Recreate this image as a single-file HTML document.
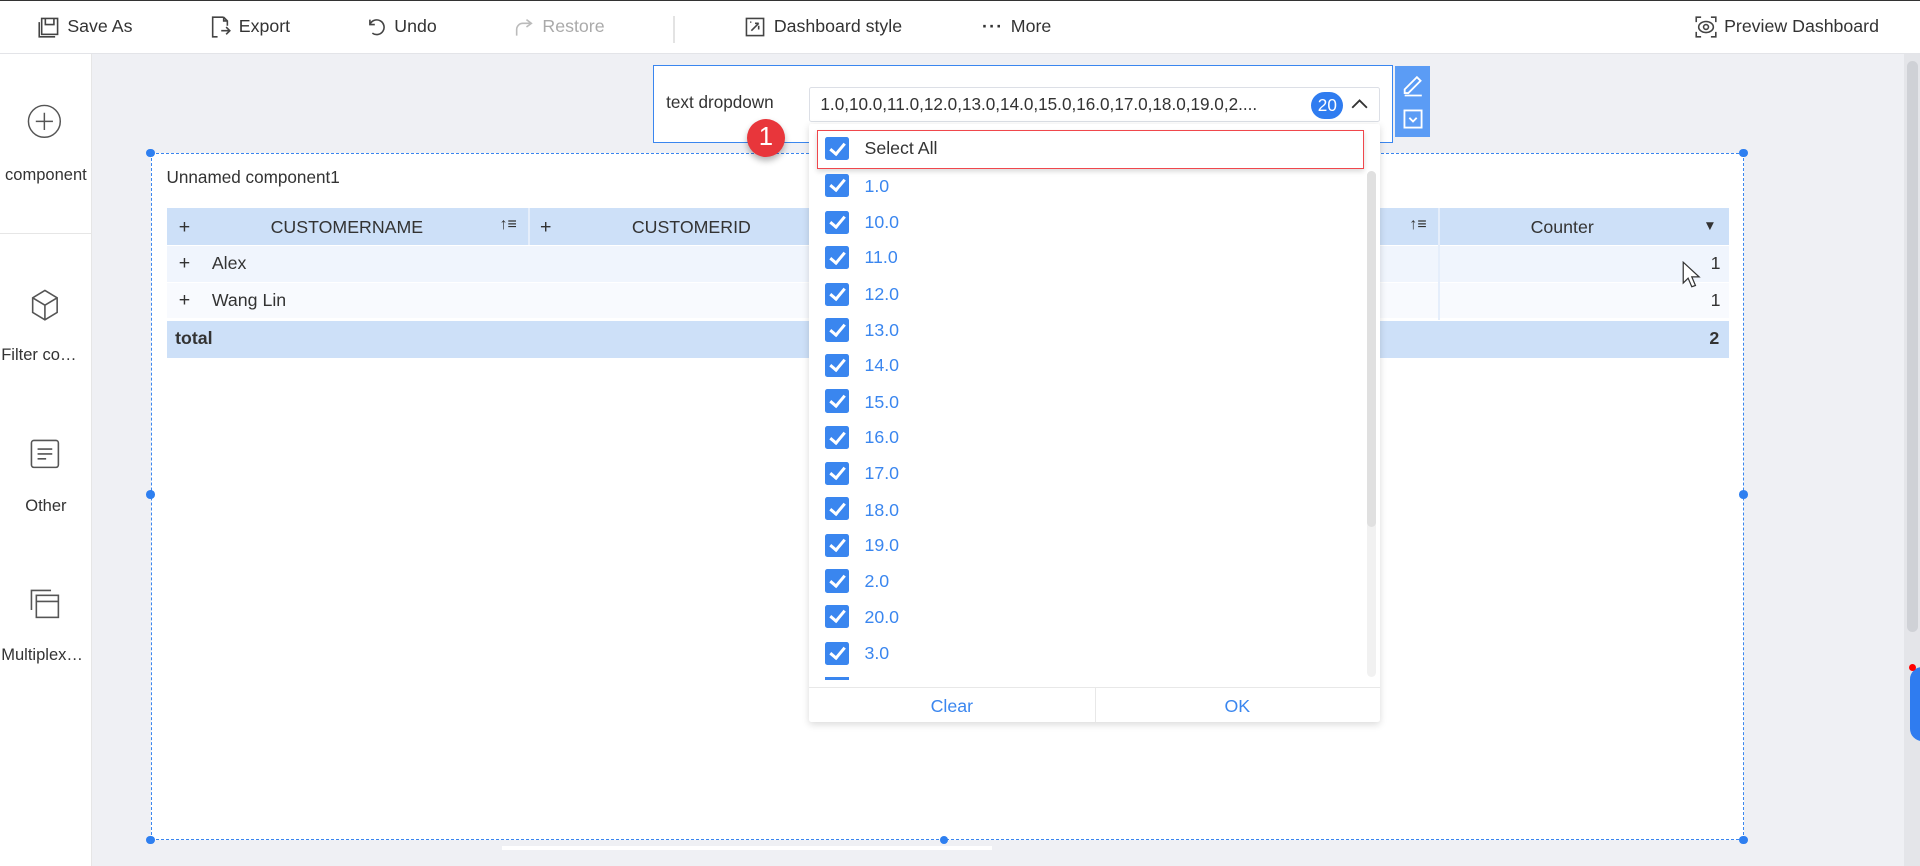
<!DOCTYPE html>
<html><head><meta charset="utf-8"><style>
html{zoom:1.22449}
*{box-sizing:border-box;margin:0;padding:0}
body{width:1568px;height:707px;overflow:hidden;background:#eff0f4;font-family:"Liberation Sans",Arial,sans-serif;font-size:14px;color:#333;position:relative}
.abs{position:absolute}
.tb{left:0;top:0;width:1568px;height:44px;background:#fff;border-top:1.5px solid #333;border-bottom:1px solid #e3e4e8}
.ti{position:absolute;top:12px;font-size:14.5px;color:#333;display:flex;align-items:center;gap:6px}
.ti svg{width:18px;height:18px}
.side{left:0;top:44px;width:75px;height:663px;background:#fff;border-right:1px solid #e6e6e6}
.sl{position:absolute;width:75px;text-align:center;font-size:13.5px;color:#333;white-space:nowrap;overflow:hidden}
.chk{position:absolute;left:674px;width:19px;height:19px;background:#3a86ef;border-radius:2px}
.chk:after{content:"";position:absolute;left:6px;top:2px;width:5px;height:10px;border:solid #fff;border-width:0 2.5px 2.5px 0;transform:rotate(40deg)}
.it{position:absolute;left:706px;font-size:14.5px;color:#3a86ef}
.dot{position:absolute;width:7px;height:7px;border-radius:50%;background:#2e7ff0;margin:-3.5px 0 0 -3.5px}
</style></head><body>
<div class="abs tb">
 <div class="ti" style="left:31px"><svg viewBox="0 0 18 18" fill="none" stroke="#444" stroke-width="1.3"><rect x="3" y="2" width="13" height="13"/><path d="M6 2v5h7V2M1 5v12h13"/></svg>Save As</div>
 <div class="ti" style="left:171px"><svg viewBox="0 0 18 18" fill="none" stroke="#444" stroke-width="1.3"><path d="M12 1H3v16h4M12 1l3 3v4M12 1v3h3M10 12h7M14 9l3 3-3 3"/></svg>Export</div>
 <div class="ti" style="left:298px"><svg viewBox="0 0 18 18" fill="none" stroke="#444" stroke-width="1.3"><path d="M4 3v4h4M4 7a6 6 0 1 1 2 7"/></svg>Undo</div>
 <div class="ti" style="left:419px;color:#aaa"><svg viewBox="0 0 18 18" fill="none" stroke="#bbb" stroke-width="1.3"><path d="M11 3l4 3-4 3M15 6H8a5 5 0 0 0-5 5v5"/></svg>Restore</div>
 <div class="abs" style="left:550px;top:12px;width:1px;height:22px;background:#e3e3e3"></div>
 <div class="ti" style="left:608px"><svg viewBox="0 0 18 18" fill="none" stroke="#444" stroke-width="1.3"><rect x="2" y="2" width="14" height="14"/><path d="M6 12l6-6M12 8v3M9 6h3M5 5h1"/></svg>Dashboard style</div>
 <div class="ti" style="left:802px"><span style="letter-spacing:1px;font-weight:bold">···</span> More</div>
 <div class="ti" style="left:1384px"><svg viewBox="0 0 18 18" fill="none" stroke="#444" stroke-width="1.3"><path d="M1 5V1h4M13 1h4v4M17 13v4h-4M5 17H1v-4"/><ellipse cx="9" cy="9" rx="6" ry="4.5"/><circle cx="9" cy="9" r="2"/></svg>Preview Dashboard</div>
</div>
<div class="abs side">
 <svg class="abs" style="left:21px;top:40px" width="30" height="30" viewBox="0 0 30 30" fill="none" stroke="#555" stroke-width="1.2"><circle cx="15" cy="15" r="13"/><path d="M15 8v14M8 15h14"/></svg>
 <div class="sl" style="top:91px">component</div>
 <div class="abs" style="left:0;top:146px;width:75px;height:1px;background:#e6e6e6"></div>
 <svg class="abs" style="left:24px;top:191px" width="26" height="28" viewBox="0 0 26 28" fill="none" stroke="#555" stroke-width="1.3"><path d="M13 2l10 6v12l-10 6-10-6V8zM3 8l10 6 10-6M13 14v12"/></svg>
 <div class="sl" style="top:238px;text-align:left;padding-left:1px">Filter co…</div>
 <svg class="abs" style="left:24px;top:314px" width="26" height="26" viewBox="0 0 26 26" fill="none" stroke="#555" stroke-width="1.3"><rect x="2" y="2" width="22" height="22" rx="2"/><path d="M7 9h12M7 13h12M7 17h7"/></svg>
 <div class="sl" style="top:361px">Other</div>
 <svg class="abs" style="left:24px;top:436px" width="26" height="26" viewBox="0 0 26 26" fill="none" stroke="#555" stroke-width="1.3"><path d="M2 18V2h16"/><rect x="6" y="6" width="18" height="18"/><path d="M6 11h18"/></svg>
 <div class="sl" style="top:483px;text-align:left;padding-left:1px">Multiplex…</div>
</div>
<!-- scrollbar right -->
<div class="abs" style="left:1555px;top:44px;width:13px;height:663px;background:#e4e5e9"></div>
<div class="abs" style="left:1557px;top:50px;width:9px;height:466px;background:#cfd1d6;border-radius:5px"></div>
<div class="abs" style="left:1560px;top:545px;width:12px;height:60px;background:#2f7cf0;border-radius:10px 0 0 10px"></div>
<div class="abs" style="left:1559px;top:542px;width:6px;height:6px;background:#f00;border-radius:50%"></div>
<!-- component -->
<div class="abs" style="left:123px;top:125px;width:1301px;height:561px;background:#fff;border:1px dashed #3a86ef"></div>
<div class="abs" style="left:136px;top:136px;font-size:14px">Unnamed component1</div>
<div class="abs" style="left:136px;top:170px;width:1276px;height:30px;background:#cde0f8"></div>
<div class="abs" style="left:136px;top:201px;width:1276px;height:29px;background:#f0f5fd"></div>
<div class="abs" style="left:136px;top:231px;width:1276px;height:29px;background:#f8fafe"></div>
<div class="abs" style="left:136px;top:262px;width:1276px;height:30px;background:#cde0f8"></div>
<div class="abs" style="left:431px;top:170px;width:2px;height:30px;background:#e5eefb"></div>
<div class="abs" style="left:1174px;top:170px;width:2px;height:91px;background:#e5eefb"></div>
<div class="abs" style="left:146px;top:176px;font-size:16px">+</div>
<div class="abs" style="left:221px;top:177px;font-size:14.5px">CUSTOMERNAME</div>
<div class="abs" style="left:408px;top:176px;font-size:13px;font-weight:bold">↑≡</div>
<div class="abs" style="left:441px;top:176px;font-size:16px">+</div>
<div class="abs" style="left:516px;top:177px;font-size:14.5px">CUSTOMERID</div>
<div class="abs" style="left:1151px;top:176px;font-size:13px;font-weight:bold">↑≡</div>
<div class="abs" style="left:1250px;top:177px;font-size:14.5px">Counter</div>
<div class="abs" style="left:1391px;top:178px;font-size:11px">▼</div>
<div class="abs" style="left:146px;top:206px;font-size:16px">+</div><div class="abs" style="left:173px;top:207px;font-size:14.5px">Alex</div>
<div class="abs" style="left:146px;top:236px;font-size:16px">+</div><div class="abs" style="left:173px;top:237px;font-size:14.5px">Wang Lin</div>
<div class="abs" style="left:143px;top:268px;font-size:14.5px;font-weight:bold">total</div>
<div class="abs" style="left:1397px;top:207px;font-size:14.5px">1</div>
<div class="abs" style="left:1397px;top:237px;font-size:14.5px">1</div>
<div class="abs" style="left:1396px;top:268px;font-size:14.5px;font-weight:bold">2</div>
<svg class="abs" style="left:1374px;top:213px" width="16" height="24" viewBox="0 0 16 24"><path d="M1 1v17l4-4 3 7 3-1-3-7h6z" fill="#fff" stroke="#333" stroke-width="1"/></svg>
<div class="dot" style="left:123px;top:125px"></div><div class="dot" style="left:1424px;top:125px"></div>
<div class="dot" style="left:123px;top:404px"></div><div class="dot" style="left:1424px;top:404px"></div>
<div class="dot" style="left:123px;top:686px"></div><div class="dot" style="left:771px;top:686px"></div><div class="dot" style="left:1424px;top:686px"></div>
<div class="abs" style="left:410px;top:691px;width:400px;height:3px;background:#fff"></div>
<!-- filter box -->
<div class="abs" style="left:533px;top:53px;width:605px;height:64px;background:#fff;border:1px solid #3a86ef"></div>
<div class="abs" style="left:1139px;top:54px;width:29px;height:58px;background:#5b9cf5"></div>
<svg class="abs" style="left:1144px;top:58px" width="20" height="22" viewBox="0 0 20 22" fill="none" stroke="#fff" stroke-width="1.5"><path d="M3 15l10-10 3 3-10 10H3zM3 20h14"/></svg>
<svg class="abs" style="left:1145px;top:88px" width="18" height="18" viewBox="0 0 18 18" fill="none" stroke="#fff" stroke-width="1.5"><rect x="2" y="2" width="14" height="14"/><path d="M6 8l3 3 3-3"/></svg>
<div class="abs" style="left:544px;top:75px;font-size:14px">text dropdown</div>
<div class="abs" style="left:661px;top:71px;width:466px;height:29px;border:1px solid #dcdfe6;border-radius:2px;background:#fff"></div>
<div class="abs" style="left:670px;top:77px;font-size:14px;color:#333">1.0,10.0,11.0,12.0,13.0,14.0,15.0,16.0,17.0,18.0,19.0,2....</div>
<div class="abs" style="left:1071px;top:75px;width:26px;height:22px;border-radius:11px;background:#2f7cf0;color:#fff;font-size:14px;text-align:center;line-height:22px">20</div>
<svg class="abs" style="left:1103px;top:80px" width="14" height="10" viewBox="0 0 14 10" fill="none" stroke="#333" stroke-width="1.5"><path d="M1 8l6-6 6 6"/></svg>
<!-- dropdown panel -->
<div class="abs" style="left:661px;top:101px;width:466px;height:489px;background:#fff;border-radius:2px;box-shadow:0 2px 6px rgba(0,0,0,.15)"></div>
<div class="abs" style="left:667px;top:106px;width:447px;height:32px;border:1.5px solid #f0474c;box-shadow:0 2px 4px rgba(0,0,0,.15)"></div>
<div class="chk" style="top:112px"></div><div class="it" style="top:113px;color:#333">Select All</div>
<div class="abs" style="left:1116px;top:140px;width:8px;height:413px;background:#f1f1f1;border-radius:4px"></div>
<div class="abs" style="left:1116px;top:140px;width:8px;height:290px;background:#e0e0e0;border-radius:4px"></div>
<div class="chk" style="top:142px"></div><div class="it" style="top:144px">1.0</div>
<div class="chk" style="top:172px"></div><div class="it" style="top:173px">10.0</div>
<div class="chk" style="top:201px"></div><div class="it" style="top:202px">11.0</div>
<div class="chk" style="top:231px"></div><div class="it" style="top:232px">12.0</div>
<div class="chk" style="top:260px"></div><div class="it" style="top:261px">13.0</div>
<div class="chk" style="top:289px"></div><div class="it" style="top:290px">14.0</div>
<div class="chk" style="top:318px"></div><div class="it" style="top:320px">15.0</div>
<div class="chk" style="top:348px"></div><div class="it" style="top:349px">16.0</div>
<div class="chk" style="top:377px"></div><div class="it" style="top:378px">17.0</div>
<div class="chk" style="top:406px"></div><div class="it" style="top:408px">18.0</div>
<div class="chk" style="top:436px"></div><div class="it" style="top:437px">19.0</div>
<div class="chk" style="top:465px"></div><div class="it" style="top:466px">2.0</div>
<div class="chk" style="top:494px"></div><div class="it" style="top:496px">20.0</div>
<div class="chk" style="top:524px"></div><div class="it" style="top:525px">3.0</div>
<div class="abs" style="left:674px;top:553px;width:19px;height:2px;background:#3a86ef"></div>
<div class="abs" style="left:661px;top:561px;width:466px;height:1px;background:#e8e8e8"></div>
<div class="abs" style="left:894px;top:561px;width:1px;height:29px;background:#e8e8e8"></div>
<div class="abs" style="left:760px;top:568px;font-size:14.5px;color:#3a86ef">Clear</div>
<div class="abs" style="left:1000px;top:568px;font-size:14.5px;color:#3a86ef">OK</div>
<!-- badge -->
<div class="abs" style="left:610px;top:97px;width:31px;height:31px;border-radius:50%;background:#e8363b;color:#fff;font-size:21px;text-align:center;line-height:31px;box-shadow:0 3px 5px rgba(0,0,0,.3)">1</div>
</body></html>
